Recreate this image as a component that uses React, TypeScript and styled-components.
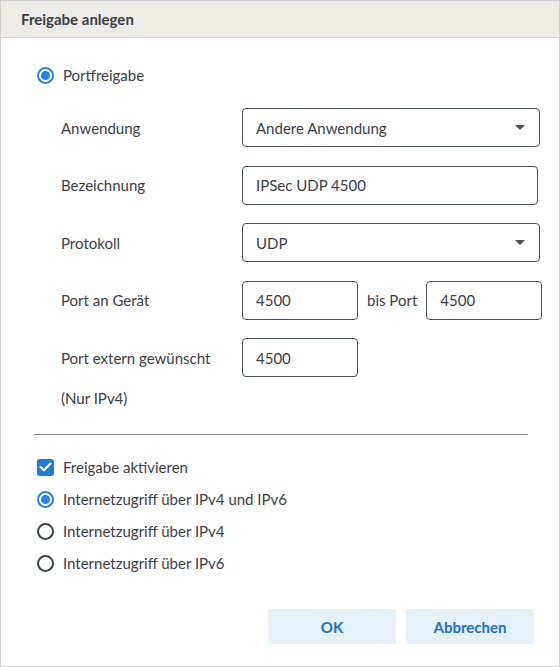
import React from "react";
import styled, { createGlobalStyle } from "styled-components";

const Global = createGlobalStyle`
  html, body { margin: 0; padding: 0; background: #fff; }
  body { font-family: "Source Sans Pro", Lato, "Noto Sans", sans-serif; color: #3b4046; }
  * { box-sizing: border-box; }
`;

const Dialog = styled.div`
  width: 560px;
  height: 667px;
  border: 1px solid #d3d3d3;
  display: flex;
  flex-direction: column;
  background: #fff;
`;

const Header = styled.div`
  height: 37px;
  flex: none;
  background: #eeece6;
  border-bottom: 1px solid #d3d3d3;
  display: flex;
  align-items: center;
  padding-left: 20px;
  font-size: 15px;
  font-weight: 700;
  color: #3b4046;
`;

const Body = styled.div`
  flex: 1;
  display: flex;
  flex-direction: column;
  padding: 26px 0 0 36px;
`;

const Option = styled.label<{ $top?: number }>`
  display: flex;
  align-items: center;
  gap: 9px;
  height: 20px;
  font-size: 15px;
  color: #3b4046;
  white-space: nowrap;
  margin-top: ${(p) => p.$top ?? 0}px;
`;

const Radio = styled.span<{ $on?: boolean }>`
  width: 17px;
  height: 17px;
  flex: none;
  border-radius: 50%;
  border: 2px solid ${(p) => (p.$on ? "#2186e3" : "#3b4046")};
  display: flex;
  align-items: center;
  justify-content: center;
  &::after {
    content: "";
    width: 9px;
    height: 9px;
    border-radius: 50%;
    background: ${(p) => (p.$on ? "#2186e3" : "transparent")};
  }
`;

const Check = styled.span`
  width: 17px;
  height: 17px;
  flex: none;
  border-radius: 3px;
  background: #1f7bd4;
  display: flex;
  align-items: center;
  justify-content: center;
`;

const Form = styled.div`
  display: grid;
  grid-template-columns: 181px 1fr;
  grid-auto-rows: 39px;
  row-gap: 18.5px;
  margin-top: 23px;
  margin-left: 24px;
`;

const Label = styled.div`
  display: flex;
  align-items: center;
  font-size: 15px;
  color: #3b4046;
  white-space: nowrap;
`;

const Field = styled.div<{ $w: number }>`
  flex: none;
  width: ${(p) => p.$w}px;
  height: 39px;
  border: 1px solid #4a4f55;
  border-radius: 4px;
  display: flex;
  align-items: center;
  padding: 0 14px 0 13px;
  font-size: 15px;
  color: #3b4046;
  justify-content: space-between;
  white-space: nowrap;
`;

const Caret = styled.span`
  width: 0;
  height: 0;
  border-left: 5px solid transparent;
  border-right: 5px solid transparent;
  border-top: 5px solid #4a5056;
`;

const PortRow = styled.div`
  display: flex;
  align-items: center;
  gap: 9px;
  font-size: 15px;
  white-space: nowrap;
`;

const Note = styled.div`
  font-size: 15px;
  margin: 12px 0 0 24px;
  color: #3b4046;
`;

const Divider = styled.hr`
  margin: 27px 0 0 -3px;
  width: 494px;
  border: none;
  border-top: 1px solid #8f8f8f;
  height: 0;
`;

const Options = styled.div`
  display: flex;
  flex-direction: column;
  gap: 12px;
  margin-top: 22px;
  margin-left: 0;
`;

const Footer = styled.div`
  display: flex;
  justify-content: flex-end;
  gap: 10px;
  padding: 0 25px 22px 0;
`;

const Button = styled.button`
  width: 128px;
  height: 35px;
  border: none;
  border-radius: 3px;
  background: #e6f0f9;
  color: #1d72c8;
  font-family: inherit;
  font-size: 15px;
  font-weight: 700;
`;

const Select = ({ value }: { value: string }) => (
  <Field $w={298}>
    <span>{value}</span>
    <Caret />
  </Field>
);

export default function App() {
  return (
    <>
      <Global />
      <Dialog>
        <Header>Freigabe anlegen</Header>
        <Body>
          <Option $top={1}>
            <Radio $on />
            Portfreigabe
          </Option>
          <Form>
            <Label>Anwendung</Label>
            <Select value="Andere Anwendung" />
            <Label>Bezeichnung</Label>
            <Field $w={296}>IPSec UDP 4500</Field>
            <Label>Protokoll</Label>
            <Select value="UDP" />
            <Label>Port an Gerät</Label>
            <PortRow>
              <Field $w={116}>4500</Field>
              bis Port
              <Field $w={116}>4500</Field>
            </PortRow>
            <Label>Port extern gewünscht</Label>
            <PortRow>
              <Field $w={116}>4500</Field>
            </PortRow>
          </Form>
          <Note>(Nur IPv4)</Note>
          <Divider />
          <Options>
            <Option>
              <Check>
                <svg width="13" height="10" viewBox="0 0 13 10">
                  <path d="M1.5 5 L5 8.3 L11.5 1.6" fill="none" stroke="#fff" strokeWidth="2.2" strokeLinecap="round" strokeLinejoin="round" />
                </svg>
              </Check>
              Freigabe aktivieren
            </Option>
            <Option>
              <Radio $on />
              Internetzugriff über IPv4 und IPv6
            </Option>
            <Option>
              <Radio />
              Internetzugriff über IPv4
            </Option>
            <Option>
              <Radio />
              Internetzugriff über IPv6
            </Option>
          </Options>
        </Body>
        <Footer>
          <Button>OK</Button>
          <Button>Abbrechen</Button>
        </Footer>
      </Dialog>
    </>
  );
}
